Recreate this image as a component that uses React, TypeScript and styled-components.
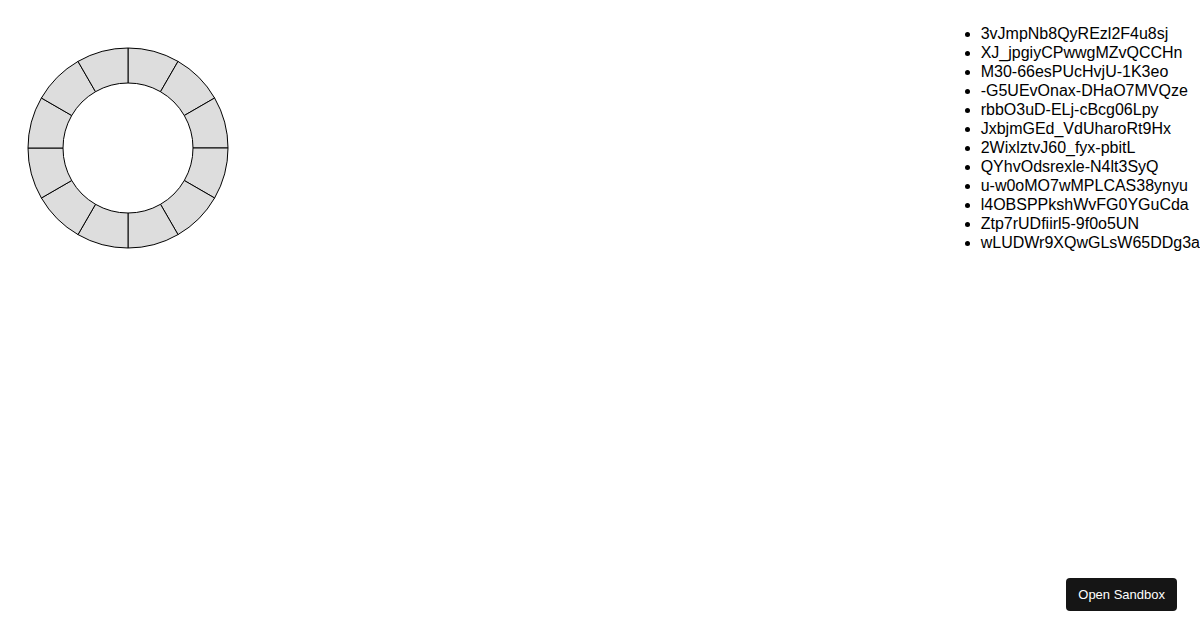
import styled, { createGlobalStyle } from "styled-components";

const GlobalStyle = createGlobalStyle`
    body {
        margin: 8px 0 8px 8px;
        background: #ffffff;
        font-family: "Liberation Sans", Arial, sans-serif;
        color: #000000;
    }
`;

const Page = styled.div`
    display: flex;
    justify-content: space-between;
    align-items: flex-start;
`;

const Chart = styled.svg`
    display: block;
    flex: none;
`;

const IdList = styled.ul`
    margin: 16px 0;
    padding-left: 40px;
    font-size: 16px;
    line-height: 19px;
    white-space: nowrap;
`;

const SandboxButton = styled.button`
    position: fixed;
    right: 23px;
    bottom: 19px;
    height: 33px;
    padding: 0 12px;
    border: 0;
    border-radius: 4px;
    background-color: #151515;
    color: #ffffff;
    font-family: "Liberation Sans", Arial, sans-serif;
    font-size: 13px;
    cursor: pointer;
`;

const ids = [
    "3vJmpNb8QyREzl2F4u8sj",
    "XJ_jpgiyCPwwgMZvQCCHn",
    "M30-66esPUcHvjU-1K3eo",
    "-G5UEvOnax-DHaO7MVQze",
    "rbbO3uD-ELj-cBcg06Lpy",
    "JxbjmGEd_VdUharoRt9Hx",
    "2WixlztvJ60_fyx-pbitL",
    "QYhvOdsrexle-N4lt3SyQ",
    "u-w0oMO7wMPLCAS38ynyu",
    "l4OBSPPkshWvFG0YGuCda",
    "Ztp7rUDfiirl5-9f0o5UN",
    "wLUDWr9XQwGLsW65DDg3a",
];

// one ring slice per id, 30deg each, starting at 12 o'clock
function slice(i: number, total: number, cx: number, cy: number, r0: number, r1: number) {
    const a0 = (i / total) * Math.PI * 2 - Math.PI / 2;
    const a1 = ((i + 1) / total) * Math.PI * 2 - Math.PI / 2;
    const p = (r: number, a: number) => `${cx + r * Math.cos(a)} ${cy + r * Math.sin(a)}`;
    return [
        `M ${p(r1, a0)}`,
        `A ${r1} ${r1} 0 0 1 ${p(r1, a1)}`,
        `L ${p(r0, a1)}`,
        `A ${r0} ${r0} 0 0 0 ${p(r0, a0)}`,
        "Z",
    ].join(" ");
}

export default function App() {
    return (
        <>
            <GlobalStyle />
            <Page>
                <Chart width={240} height={280} viewBox="0 0 240 280">
                    {ids.map((id, i) => (
                        <path
                            key={id}
                            d={slice(i, ids.length, 120, 140, 65, 100)}
                            fill="#dddddd"
                            stroke="#000000"
                            strokeWidth={1}
                        />
                    ))}
                </Chart>
                <IdList>
                    {ids.map((id) => (
                        <li key={id}>{id}</li>
                    ))}
                </IdList>
            </Page>
            <SandboxButton>Open Sandbox</SandboxButton>
        </>
    );
}
